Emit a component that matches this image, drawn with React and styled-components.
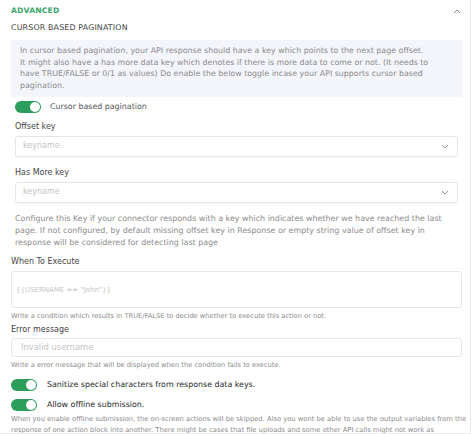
import React from "react";
import styled, { createGlobalStyle } from "styled-components";

const Global = createGlobalStyle`
  html, body { margin: 0; padding: 0; background: #fff; }
  body { font-family: "DejaVu Sans", "Open Sans", sans-serif; color: #444; }
  * { box-sizing: border-box; }
`;

const Panel = styled.div`
  width: 471px;
  height: 434px;
  border-right: 1px solid #ececec;
  padding: 4px 8px 0 11px;
  position: relative;
`;

const HeaderRow = styled.div`
  display: flex;
  align-items: center;
  justify-content: space-between;
  height: 13px;
`;

const GreenTitle = styled.div`
  color: #3aa46a;
  font-size: 7.6px;
  font-weight: 700;
  letter-spacing: 0.2px;
`;

const Chevron = styled.svg`
  width: 8px;
  height: 6px;
  margin-right: 1px;
`;

const SectionTitle = styled.div`
  margin-top: 6px;
  height: 10px;
  line-height: 10px;
  font-size: 7.9px;
  color: #444;
  letter-spacing: 0.15px;
`;

const InfoBox = styled.div`
  margin-top: 7px;
  background: #f4f5fb;
  padding: 5px 9px 5px 9px;
  font-size: 7.9px;
  line-height: 11.7px;
  color: #8b8b8b;
  white-space: nowrap;
`;

const Inner = styled.div`
  padding: 0 4px;
`;

const ToggleRow = styled.div`
  display: flex;
  align-items: center;
  height: 12px;
  gap: ${(p) => p.gap || 9}px;
  margin-top: ${(p) => p.mt || 0}px;
`;

const Switch = styled.div`
  width: 26px;
  height: 12px;
  border-radius: 6px;
  background: #2b9e5c;
  position: relative;
  flex-shrink: 0;
  &::after {
    content: "";
    position: absolute;
    right: 1px;
    top: 1px;
    width: 10px;
    height: 10px;
    border-radius: 50%;
    background: #fff;
  }
`;

const ToggleLabel = styled.span`
  font-size: 7.9px;
  color: ${(p) => (p.strong ? "#2a2a2a" : "#555")};
  white-space: nowrap;
`;

const FieldLabel = styled.div`
  font-size: 8px;
  height: 10px;
  line-height: 10px;
  color: #444;
  margin-top: ${(p) => p.mt || 0}px;
  margin-bottom: ${(p) => p.mb || 4}px;
`;

const SelectBox = styled.div`
  height: 21px;
  border: 1px solid #e6e6e6;
  border-radius: 3px;
  display: flex;
  align-items: center;
  justify-content: space-between;
  padding: 0 8px 0 7px;
  box-shadow: 0 1px 1px rgba(0,0,0,0.03);
`;

const Placeholder = styled.span`
  font-size: ${(p) => p.size || 7.8}px;
  line-height: 10px;
  color: #c4c4c4;
`;

const Desc = styled.div`
  margin-top: 10px;
  font-size: 7.95px;
  line-height: 12px;
  color: #8b8b8b;
  white-space: nowrap;
`;

const TextArea = styled.div`
  height: 37px;
  border: 1px solid #e6e6e6;
  border-radius: 3px;
  padding: 5px 4px;
`;

const InputBox = styled.div`
  height: 19px;
  border: 1px solid #e6e6e6;
  border-radius: 3px;
  display: flex;
  align-items: center;
  padding: 0 9px;
`;

const Help = styled.div`
  font-size: ${(p) => p.size || 6.7}px;
  line-height: ${(p) => p.lh || 10}px;
  color: #8b8b8b;
  margin-top: ${(p) => p.mt || 3}px;
  white-space: nowrap;
`;

const BottomLine = styled.div`
  position: absolute;
  left: 0;
  right: 0;
  bottom: 0;
  height: 1px;
  background: #ececec;
`;

const Down = () => (
  <svg width="8" height="5" viewBox="0 0 8 5">
    <path d="M1 1l3 3 3-3" fill="none" stroke="#9a9a9a" strokeWidth="1" />
  </svg>
);

export default function App() {
  return (
    <>
      <Global />
      <Panel>
        <HeaderRow>
          <GreenTitle>ADVANCED</GreenTitle>
          <Chevron viewBox="0 0 8 6">
            <path d="M1 5l3-3 3 3" fill="none" stroke="#888" strokeWidth="1" />
          </Chevron>
        </HeaderRow>
        <SectionTitle>CURSOR BASED PAGINATION</SectionTitle>
        <InfoBox>
          In cursor based pagination, your API response should have a key which points to the next page offset.
          <br />
          It might also have a has more data key which denotes if there is more data to come or not. (It needs to
          <br />
          have TRUE/FALSE or 0/1 as values) Do enable the below toggle incase your API supports cursor based
          <br />
          pagination.
        </InfoBox>
        <Inner>
          <ToggleRow mt={4}>
            <Switch />
            <ToggleLabel>Cursor based pagination</ToggleLabel>
          </ToggleRow>
          <FieldLabel mt={9}>Offset key</FieldLabel>
          <SelectBox>
            <Placeholder size={8}>keyname</Placeholder>
            <Down />
          </SelectBox>
          <FieldLabel mt={11}>Has More key</FieldLabel>
          <SelectBox>
            <Placeholder size={8}>keyname</Placeholder>
            <Down />
          </SelectBox>
          <Desc>
            Configure this Key if your connector responds with a key which indicates whether we have reached the last
            <br />
            page. If not configured, by default missing offset key in Response or empty string value of offset key in
            <br />
            response will be considered for detecting last page
          </Desc>
        </Inner>
        <FieldLabel mt={8} mb={0}>When To Execute</FieldLabel>
        <TextArea>
          <Placeholder size={7}>{'{{USERNAME == "John"}}'}</Placeholder>
        </TextArea>
        <Help>Write a condition which results in TRUE/FALSE to decide whether to execute this action or not.</Help>
        <FieldLabel mt={4} mb={3}>Error message</FieldLabel>
        <InputBox>
          <Placeholder size={8.4}>Invalid username</Placeholder>
        </InputBox>
        <Help>Write a error message that will be displayed when the condition fails to execute.</Help>
        <ToggleRow mt={9} gap={10}>
          <Switch />
          <ToggleLabel strong>Sanitize special characters from response data keys.</ToggleLabel>
        </ToggleRow>
        <ToggleRow mt={8} gap={10}>
          <Switch />
          <ToggleLabel strong>Allow offline submission.</ToggleLabel>
        </ToggleRow>
        <Help size={6.75} lh={11.5} mt={3}>
          When you enable offline submission, the on-screen actions will be skipped. Also you wont be able to use the output variables from the
          <br />
          response of one action block into another. There might be cases that file uploads and some other API calls might not work as
        </Help>
        <BottomLine />
      </Panel>
    </>
  );
}
